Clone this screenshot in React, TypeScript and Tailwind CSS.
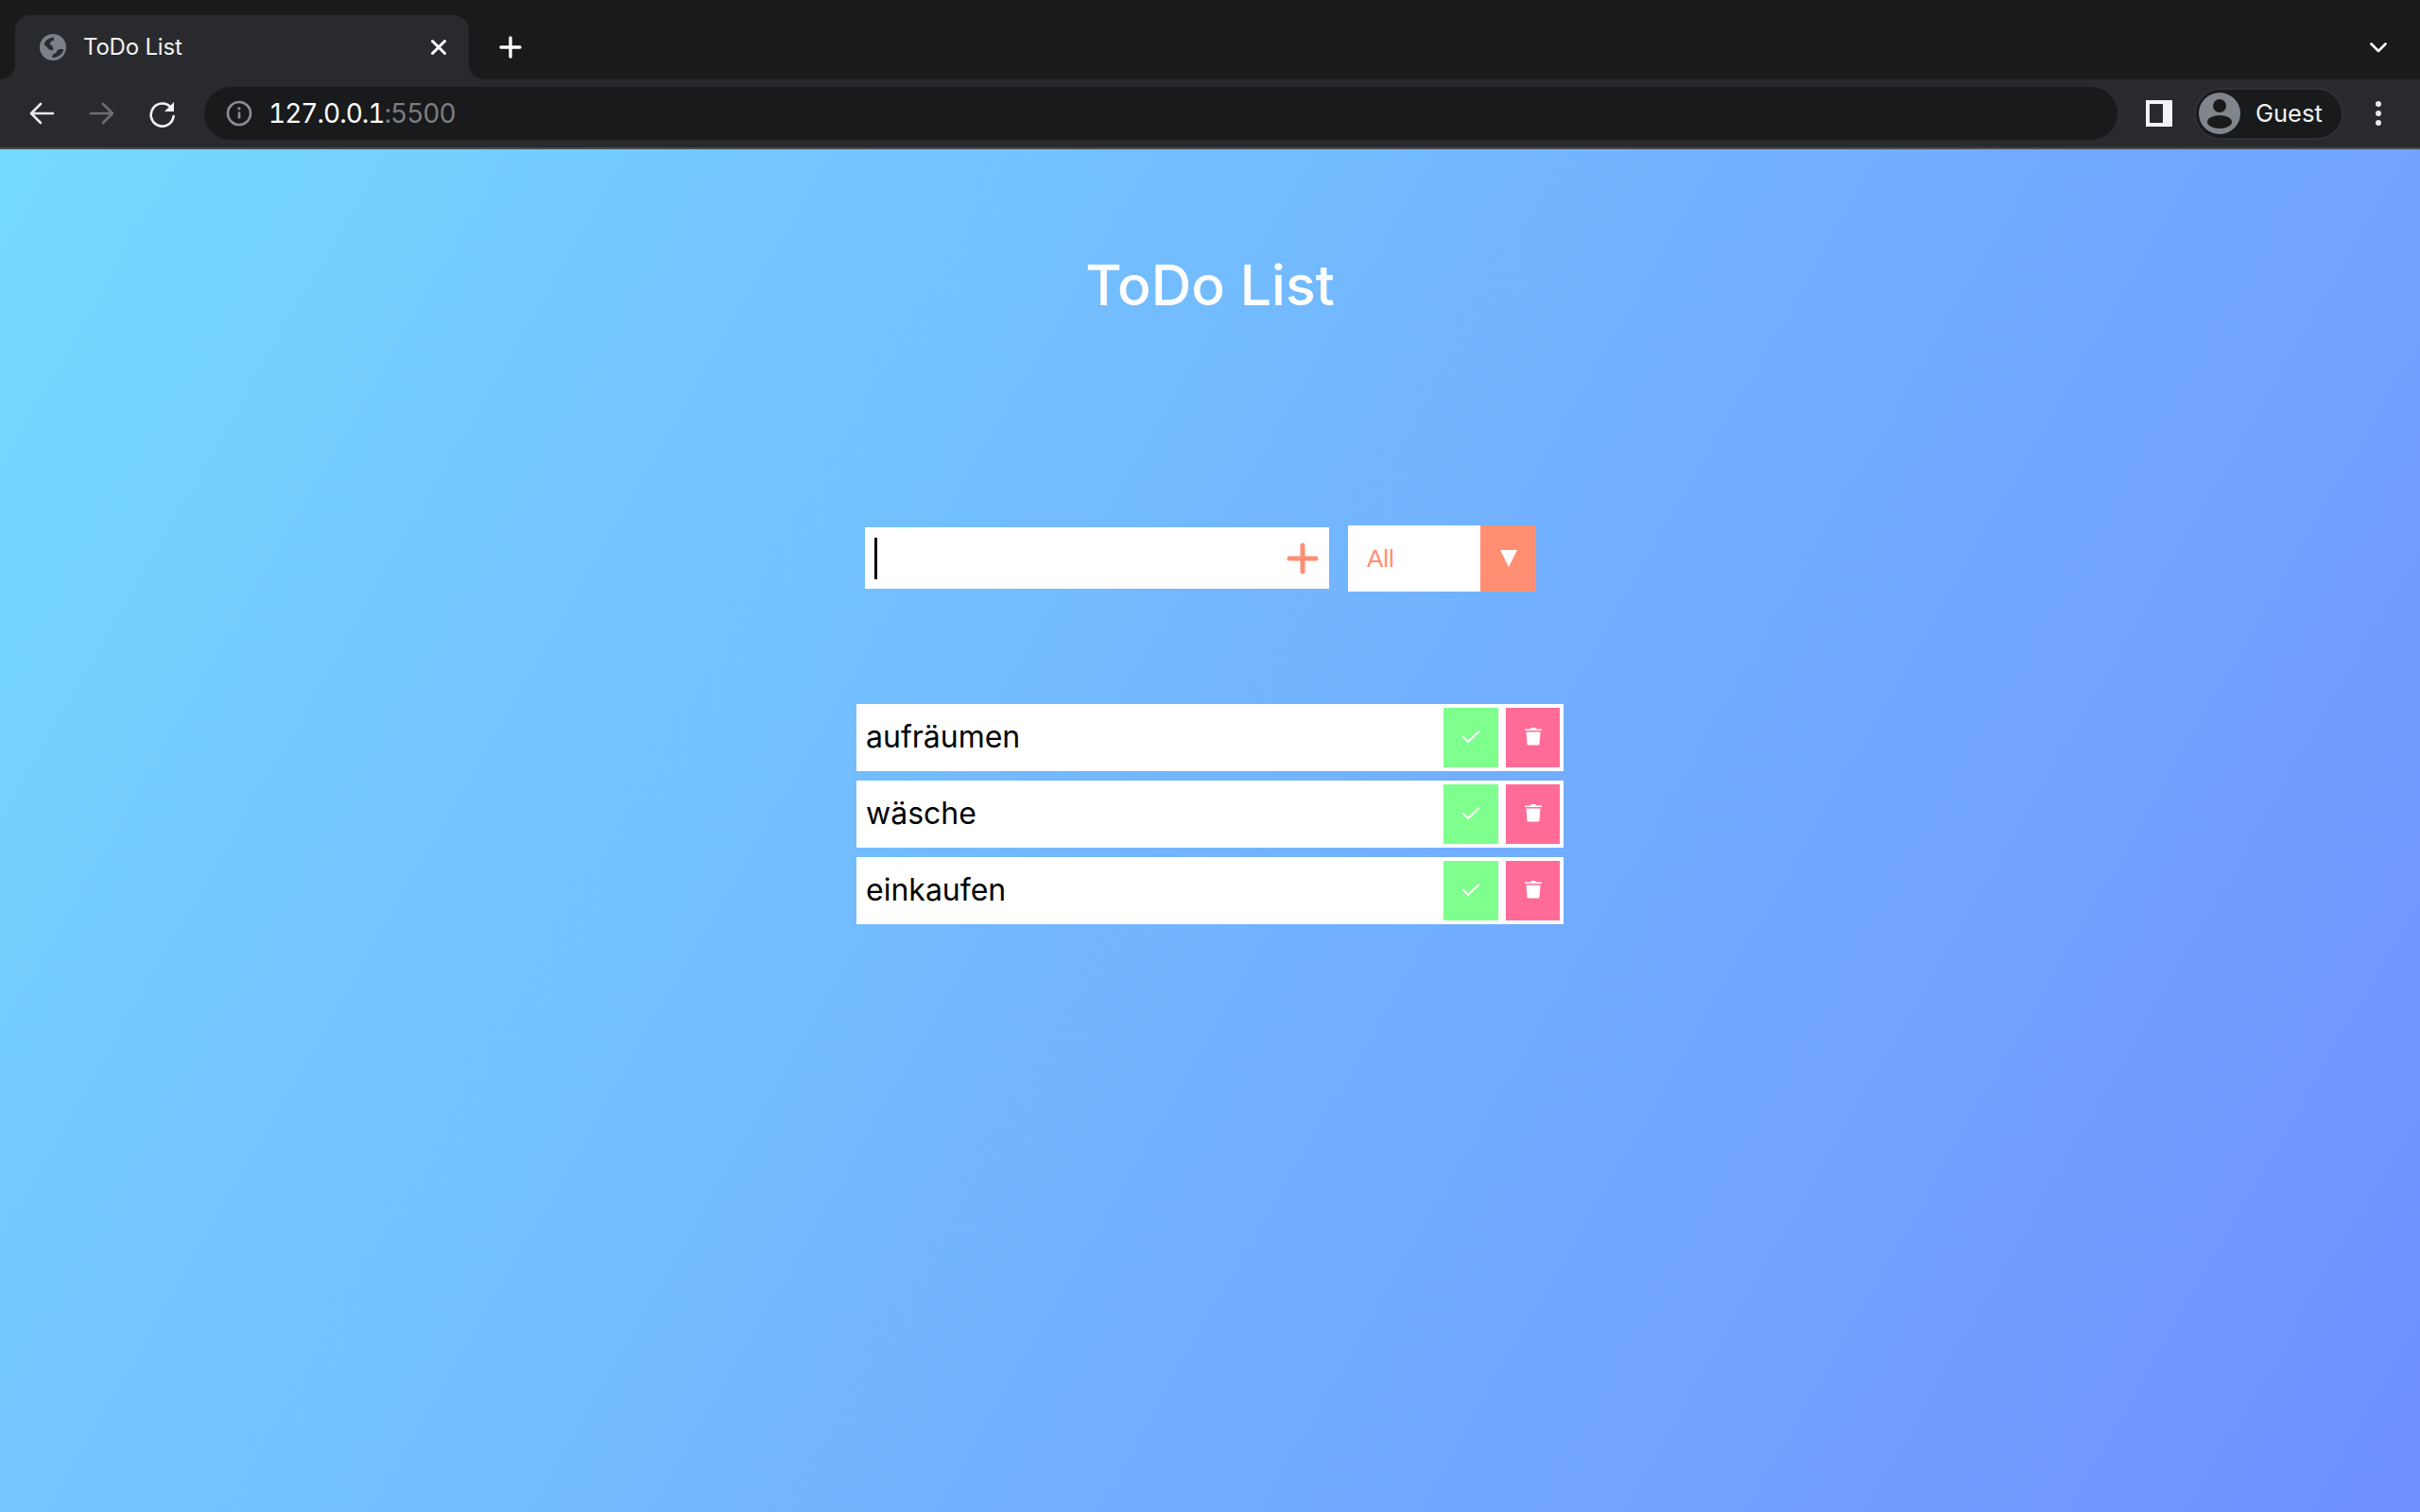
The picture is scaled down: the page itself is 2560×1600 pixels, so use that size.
import React from 'react';

const todos = ['aufräumen', 'wäsche', 'einkaufen'];

const Globe = () => (
  <svg width="28" height="28" viewBox="0 0 28 28" className="shrink-0">
    <circle cx="14" cy="14" r="14" fill="#7b8087" />
    <path d="M4.500 11C6 6.500 10 4 15 3.500v3c-2.500.5-4 2-4.300 4.500 3 1.500 4.500 3.500 3 6.500L9.500 16C8 14 6.500 12.500 4.500 11z" fill="#292a2e" />
    <path d="M13 25c0-2.500 1.500-4.500 4.500-5 0-3 3-5 8-3.500C24 21.500 19 25 13 25z" fill="#292a2e" />
  </svg>
);

const ToolbarIcon = ({ d, color = '#e8eaed' }: { d: string; color?: string }) => (
  <svg width="32" height="32" viewBox="0 0 32 32" fill="none" stroke={color} strokeWidth="2.6" strokeLinecap="round" strokeLinejoin="round">
    <path d={d} />
  </svg>
);

const BrowserChrome = () => (
  <div className="font-['Inter',sans-serif]">
    <div className="h-[84px] bg-[#191a1c] pt-4 pl-4 pr-[35px] flex items-stretch">
      <div className="relative w-[480px] bg-[#292a2e] rounded-t-[16px] flex items-center pl-[26px] pr-[24px] text-white">
        <div className="absolute -left-4 bottom-0 w-4 h-4 bg-[#292a2e]">
          <div className="w-full h-full bg-[#191a1c] rounded-br-[16px]" />
        </div>
        <div className="absolute -right-4 bottom-0 w-4 h-4 bg-[#292a2e]">
          <div className="w-full h-full bg-[#191a1c] rounded-bl-[16px]" />
        </div>
        <Globe />
        <span className="ml-[18px] text-[24px] tracking-[-0.2px] text-[#f1f3f4] flex-1">ToDo List</span>
        <svg width="16" height="16" viewBox="0 0 16 16" stroke="#fff" strokeWidth="3" strokeLinecap="round">
          <path d="M1.5 1.5l13 13M14.5 1.5l-13 13" />
        </svg>
      </div>
      <div className="ml-[32px] flex items-center">
        <svg width="24" height="24" viewBox="0 0 24 24" stroke="#fff" strokeWidth="3.4" strokeLinecap="round">
          <path d="M12 2v20M2 12h20" />
        </svg>
      </div>
      <div className="flex-1" />
      <div className="flex items-center">
        <svg width="18" height="11" viewBox="0 0 18 11" fill="none" stroke="#fff" strokeWidth="2.6" strokeLinecap="round" strokeLinejoin="round">
          <path d="M1.5 1.5L9 9l7.5-7.5" />
        </svg>
      </div>
    </div>
    <div className="h-[74px] bg-[#292a2e] border-b-2 border-[#494c50] flex items-center pl-[28px] pr-[41px]">
      <ToolbarIcon d="M28 16H5M15 6L5 16l10 10" />
      <div className="w-[32px]" />
      <ToolbarIcon color="#6c6e71" d="M4 16h23M17 6l10 10-10 10" />
      <div className="w-[32px]" />
      <svg width="32" height="32" viewBox="0 0 32 32" fill="none">
        <path d="M25 10a12 12 0 1 0 2.600 9" stroke="#f1f3f4" strokeWidth="2.600" strokeLinecap="round" />
        <path d="M28 4v10H18z" fill="#f1f3f4" />
      </svg>
      <div className="ml-[28px] flex-1 h-[56px] bg-[#191a1c] rounded-full flex items-center pl-[23px]">
        <svg width="28" height="28" viewBox="0 0 28 28" fill="none">
          <circle cx="14" cy="14" r="12" stroke="#8a8d91" strokeWidth="2.6" />
          <path d="M14 12.500v7" stroke="#8a8d91" strokeWidth="2.6" />
          <circle cx="14" cy="8.800" r="1.6" fill="#8a8d91" />
        </svg>
        <span className="ml-[17px] text-[28px] tabular-nums tracking-[-1px] text-white">
          127.0.0.1<span className="text-[#7b7d81]">:5500</span>
        </span>
      </div>
      <div className="ml-[30px] w-[28px] h-[28px] bg-[#f1f3f4] border-[4px] border-[#f1f3f4] border-r-[10px] flex">
        <div className="w-full h-full bg-[#292a2e]" />
      </div>
      <div className="ml-[23px] w-[158px] h-[55px] bg-[#191a1c] border-2 border-[#303136] rounded-full flex items-center pl-[3px]">
        <svg width="44" height="44" viewBox="0 0 44 44" className="shrink-0">
          <circle cx="22" cy="22" r="22" fill="#80868b" />
          <circle cx="22" cy="14" r="7" fill="#191a1c" />
          <ellipse cx="22" cy="31" rx="13" ry="7" fill="#191a1c" />
        </svg>
        <span className="ml-[16px] pt-[1px] text-[25.500px] text-[#f1f3f4]">Guest</span>
      </div>
      <div className="ml-[34px] flex flex-col gap-[4px]">
        <div className="w-[6px] h-[6px] rounded-full bg-[#e8eaed]" />
        <div className="w-[6px] h-[6px] rounded-full bg-[#e8eaed]" />
        <div className="w-[6px] h-[6px] rounded-full bg-[#e8eaed]" />
      </div>
    </div>
  </div>
);

const TodoRow = ({ label }: { label: string }) => (
  <li className="h-[71px] bg-white flex items-center pl-[10px] pr-[4px]">
    <span className="flex-1 pb-[2px] text-[32px] text-black">{label}</span>
    <div className="w-[58px] h-[63px] pb-[2px] bg-[#7fff8d] flex items-center justify-center">
      <svg width="18" height="14" viewBox="0 0 18 14" fill="none" stroke="#fff" strokeWidth="2" strokeLinecap="round" strokeLinejoin="round">
        <path d="M1 7l5 5L17 1.500" />
      </svg>
    </div>
    <div className="ml-[8px] w-[57px] h-[63px] pb-[3px] bg-[#ff6b97] flex items-center justify-center">
      <svg width="18" height="20" viewBox="0 0 18 20" fill="#fff">
        <path d="M0 2.500h6.500V1h5v1.500H18V4H0zM1.500 5.500h15l-1 13a1.200 1.200 0 0 1-1.200 1H3.700a1.200 1.200 0 0 1-1.200-1z" />
      </svg>
    </div>
  </li>
);

export default function App() {
  return (
    <div className="min-h-[1600px] flex flex-col">
      <BrowserChrome />
      <div className="flex-1 flex flex-col items-center font-['Inter',sans-serif] bg-[linear-gradient(120deg,#75d9ff,#7090ff)]">
        <h1 className="mt-[100px] h-[88px] leading-[88px] text-[59px] font-medium text-white">ToDo List</h1>
        <div className="mt-[210px] pr-[20px] flex items-center">
          <div className="w-[491px] h-[65px] mb-[1px] bg-white flex items-center pl-[10px] pr-[11px]">
            <div className="w-[3px] h-[44px] bg-black" />
            <div className="flex-1" />
            <svg width="34" height="34" viewBox="0 0 34 34" stroke="#ff8e72" strokeWidth="5" strokeLinecap="round">
              <path d="M17 3v28M3 17h28" />
            </svg>
          </div>
          <div className="ml-[20px] w-[199px] h-[70px] bg-white flex items-center">
            <span className="flex-1 pl-[20px] text-[26px] text-[#ff8e72] font-['Liberation_Sans',sans-serif]">All</span>
            <div className="w-[59px] h-full bg-[#ff8e72] flex items-center justify-center">
              <span className="w-0 h-0 border-x-[9px] border-x-transparent border-t-[18px] border-t-white" />
            </div>
          </div>
        </div>
        <ul className="mt-[119px] w-[748px] flex flex-col gap-[10px]">
          {todos.map((todo) => (
            <TodoRow key={todo} label={todo} />
          ))}
        </ul>
      </div>
    </div>
  );
}
